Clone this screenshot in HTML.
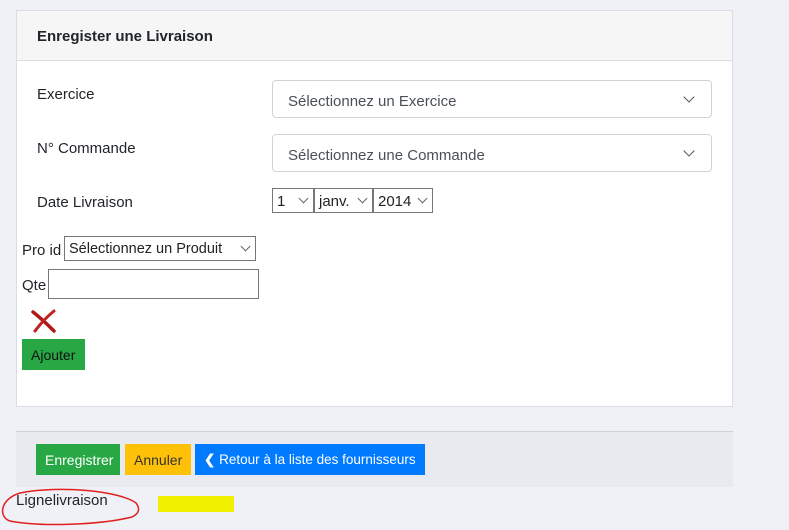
<!DOCTYPE html>
<html><head><meta charset="utf-8"><style>
*{box-sizing:border-box;margin:0;padding:0}
body{width:789px;height:530px;background:#f0f1f6;font-family:"Liberation Sans",sans-serif;color:#212529;position:relative;overflow:hidden;font-size:15px}
.a{position:absolute;white-space:nowrap}
.card{left:16px;top:10px;width:717px;height:397px;background:#fff;border:1px solid #dcdde2}
.hdr{left:0;top:0;width:715px;height:50px;background:#f6f6f6;border-bottom:1px solid #dcdde2;font-weight:bold;font-size:15px;padding:17px 20px}
.sel{background:#fff;border:1px solid #ced4da;border-radius:4px;color:#495057;padding:11px 15px;font-size:15px}
.chev{position:absolute;right:18px;top:12px;width:8px;height:8px;border-right:1px solid #555;border-bottom:1px solid #555;transform:rotate(45deg)}
.ns{border:1px solid #777;background:#fff;height:25px;font-size:15px;padding:3px 4px;color:#222}
.sm{position:absolute;right:6px;top:6px;width:7px;height:7px;border-right:1px solid #666;border-bottom:1px solid #666;transform:rotate(45deg)}
.btn{height:31px;font-size:14px;padding:8px 9px;color:#fff}
</style></head><body>
<div class="a card">
<div class="a hdr">Enregister une Livraison</div>
</div>
<div class="a" style="left:37px;top:86px">Exercice</div>
<div class="a sel" style="left:272px;top:80px;width:440px;height:38px;padding-top:12px">Sélectionnez un Exercice<span class="chev"></span></div>
<div class="a" style="left:37px;top:140px">N° Commande</div>
<div class="a sel" style="left:272px;top:134px;width:440px;height:38px;padding-top:12px">Sélectionnez une Commande<span class="chev"></span></div>
<div class="a" style="left:37px;top:194px">Date Livraison</div>
<div class="a ns" style="left:272px;top:188px;width:42px;padding-top:4px">1<span class="sm"></span></div>
<div class="a ns" style="left:314px;top:188px;width:59px;padding-top:4px">janv.<span class="sm"></span></div>
<div class="a ns" style="left:373px;top:188px;width:60px;padding-top:4px">2014<span class="sm"></span></div>
<div class="a" style="left:22px;top:242px">Pro id</div>
<div class="a ns" style="left:64px;top:236px;width:192px;padding-top:4px;font-size:14.5px">Sélectionnez un Produit<span class="sm"></span></div>
<div class="a" style="left:22px;top:277px">Qte</div>
<div class="a" style="left:48px;top:269px;width:211px;height:30px;border:1px solid #777;background:#fff"></div>
<svg class="a" style="left:30px;top:309px" width="28" height="25" viewBox="0 0 28 25"><path d="M3 3 Q12 10 24 22" stroke="#b01818" stroke-width="3.5" fill="none" stroke-linecap="round"/><path d="M24 2 Q14 10 5 22" stroke="#c02020" stroke-width="3" fill="none" stroke-linecap="round"/></svg>
<div class="a btn" style="left:22px;top:339px;width:63px;background:#28a745;color:#111">Ajouter</div>
<div class="a" style="left:16px;top:431px;width:717px;height:56px;background:#e9eaef;border-top:1px solid #d0d1d6"></div>
<div class="a btn" style="left:36px;top:444px;width:84px;background:#28a745">Enregistrer</div>
<div class="a btn" style="left:125px;top:444px;width:66px;background:#ffc107;color:#333">Annuler</div>
<div class="a btn" style="left:195px;top:444px;width:230px;background:#007bff;font-size:13.5px"><b>&#x276E;</b> Retour à la liste des fournisseurs</div>
<div class="a" style="left:16px;top:492px">Lignelivraison</div>
<svg class="a" style="left:0;top:487px" width="145" height="40"><path d="M20 6 C60 -2 120 4 136 16 C142 24 136 28 132 30 C100 38 40 40 10 34 C-2 30 0 12 20 6" stroke="#e02020" stroke-width="1.5" fill="none"/></svg>
<div class="a" style="left:158px;top:496px;width:76px;height:16px;background:#f0f000"></div>
</body></html>
